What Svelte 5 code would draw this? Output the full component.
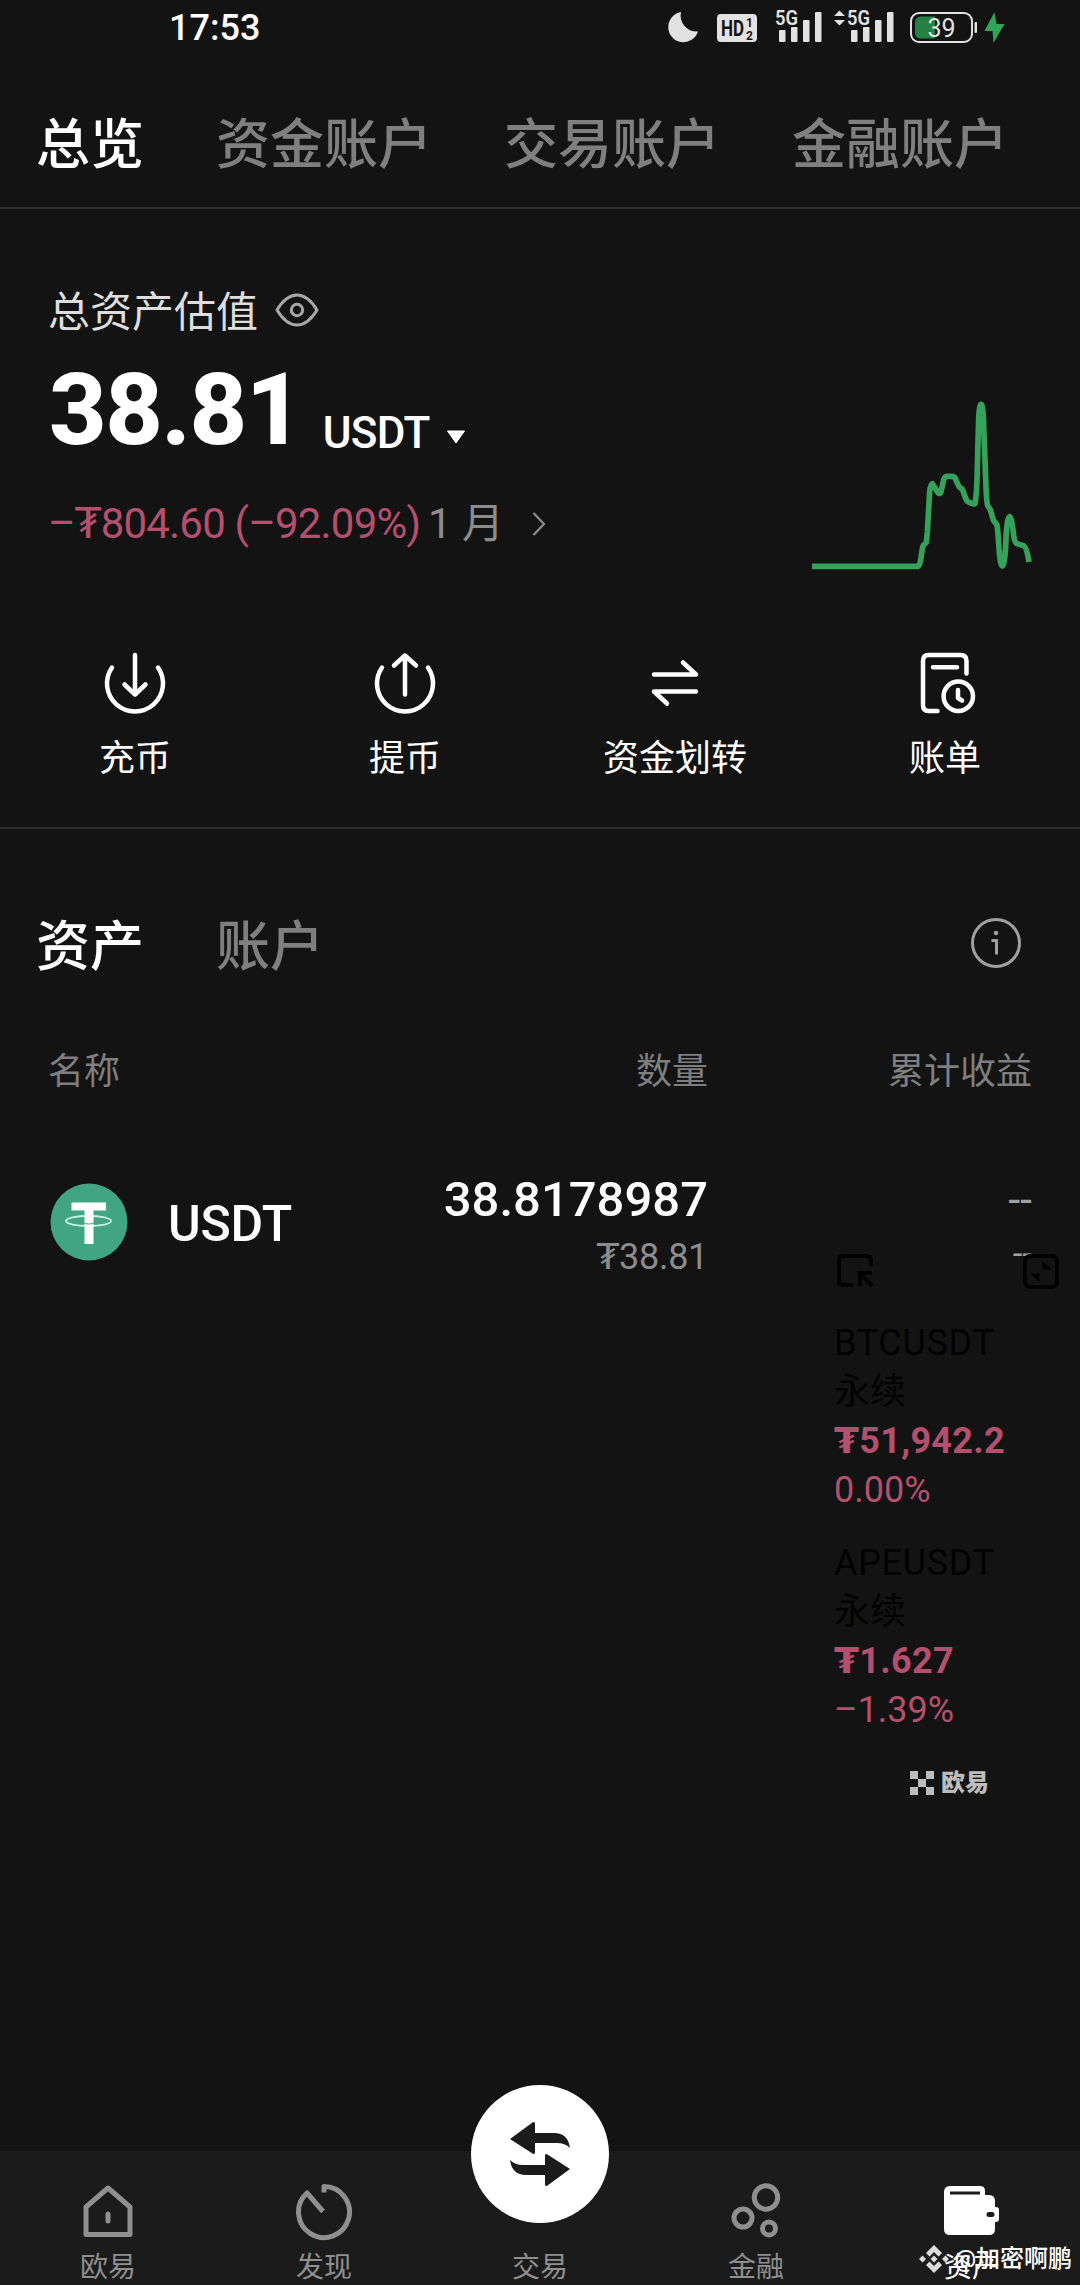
<script lang="ts">
	type Ticker = { pair: string; price: string; change: string };

	const accounts = ['总览', '资金账户', '交易账户', '金融账户'];
	const lists = ['资产', '账户'];
	const tickers: Ticker[] = [
		{ pair: 'BTCUSDT', price: '51,942.2', change: '0.00%' },
		{ pair: 'APEUSDT', price: '1.627', change: '–1.39%' }
	];

	let account = $state('总览');
	let list = $state('资产');
</script>

<div class="app">
	<div class="status">
		<span class="time">17:53</span>
		<svg class="indicators" width="340" height="44" viewBox="665 5 340 44" fill="#e2e2e2">
			<path d="M681 12a15.2 15.2 0 1 0 17 19.500a16 16 0 0 1-17-19.500z" />
			<rect x="717" y="14" width="40" height="28" rx="4" />
			<g fill="#131313" font-weight="700">
				<text x="721" y="36" font-size="22" textLength="23" lengthAdjust="spacingAndGlyphs">HD</text>
				<text x="746" y="27" font-size="12">1</text>
				<text x="746" y="40" font-size="12">2</text>
			</g>
			{#each [0, 72] as dx}
				<g transform="translate({dx} 0)">
					<text x="775" y="25" font-size="21" font-weight="600" textLength="23" lengthAdjust="spacingAndGlyphs">5G</text>
					<rect x="779" y="30" width="6.500" height="12" rx="1" />
					<rect x="791" y="27" width="6.500" height="15" rx="1" />
					<rect x="803" y="20" width="6.500" height="22" rx="1" />
					<rect x="815" y="12" width="6.500" height="30" rx="1" />
				</g>
			{/each}
			<path d="M839.500 10.500l5.500 5.500h-11zM839.500 25.500l5.500-5.500h-11z" />
			<rect x="911" y="13" width="61" height="29" rx="8" fill="none" stroke="#e2e2e2" stroke-width="2" />
			<path d="M921 16.500h14v22h-14q-6 0-6-6v-10q0-6 6-6z" fill="#248043" />
			<rect x="974.500" y="22" width="2.500" height="11" rx="1" />
			<text x="941.500" y="36.500" font-size="25" text-anchor="middle">39</text>
			<path d="M994.500 12l-10 19h8l1 12 11-19h-8z" fill="#32a458" />
		</svg>
	</div>

	<nav class="tabs top">
		{#each accounts as name}
			<button class:active={account === name} onclick={() => (account = name)}>{name}</button>
		{/each}
	</nav>

	<section class="summary">
		<div class="worth">
			<div class="label">
				<span>总资产估值</span>
				<svg width="44" height="34" viewBox="0 0 44 34" fill="none" stroke="#a8a8a8" stroke-width="3">
					<path d="M2 17C8 7 14 2 22 2s14 5 20 15c-6 10-12 15-20 15S8 27 2 17z" stroke-linejoin="round" />
					<circle cx="22" cy="17" r="5.700" />
				</svg>
			</div>
			<div class="total">
				<strong>38.81</strong>
				<span>USDT</span>
				<svg width="20" height="14" viewBox="0 0 20 14"><path d="M1.500 1h17L10 13z" fill="#fff" stroke="#fff" stroke-linejoin="round" /></svg>
			</div>
			<div class="pnl">
				<span class="down">–₮804.60 (–92.09%)</span>
				<span class="period"><span class="num">1</span> 月</span>
				<svg width="14" height="26" viewBox="0 0 14 26" fill="none" stroke="#8c8c8c" stroke-width="2.200"><path d="M1.500 2l10.500 11-10.500 11" /></svg>
			</div>
		</div>
		<svg class="chart" width="224" height="174" viewBox="0 0 672 522" fill="none" stroke="#35a15b" stroke-width="17" stroke-linejoin="round">
			<path d="M6 508H324Q329 505 332 488L338 450Q340 442 349 436L352 405L359 285Q361 262 367 260L384 287Q390 293 393 285L401 248Q404 239 411 238H426Q434 238 437 247L447 269L457 277L467 304Q470 313 480 317Q489 323 495 320Q499 300 501 250L506 60Q509 22 513 22Q518 22 520 60L528 270Q530 318 533 326L541 338L550 369L561 384Q564 405 567 455Q571 507 577 507Q583 507 587 450Q590 361 598 359Q604 358 609 398Q612 432 618 438Q623 442 641 446Q650 450 657 495" />
		</svg>
	</section>

	<section class="actions">
		<button>
			<svg width="64" height="64" viewBox="0 0 64 64">
				<path d="M9 16.500a28 28 0 1 0 46 0M32 4v39M21.500 33.500L32 43.500l10.500-10" />
			</svg>
			<span>充币</span>
		</button>
		<button>
			<svg width="64" height="64" viewBox="0 0 64 64">
				<path d="M9 16.500a28 28 0 1 0 46 0M32 43.500V4.500M21 14.500L32 4.500l11 10" />
			</svg>
			<span>提币</span>
		</button>
		<button>
			<svg width="64" height="64" viewBox="0 0 64 64">
				<path d="M11 23.500h42L40 11.500M53 40.500H11l13 12" />
			</svg>
			<span>资金划转</span>
		</button>
		<button>
			<svg width="64" height="64" viewBox="0 0 64 64">
				<path d="M53.500 22.500V10q0-6-6-6h-32q-5.500 0-5.500 6v44q0 6 5.500 6h9M20 16.300h24M45 39v8l4 2.500" />
				<circle cx="45.300" cy="45.300" r="14.700" />
			</svg>
			<span>账单</span>
		</button>
	</section>

	<nav class="tabs lists">
		{#each lists as name}
			<button class:active={list === name} onclick={() => (list = name)}>{name}</button>
		{/each}
		<svg class="info" width="52" height="52" viewBox="0 0 52 52" fill="none" stroke="#a0a0a0" stroke-width="3">
			<circle cx="26" cy="26" r="23.500" />
			<path d="M21.500 23.500h5v14" />
			<circle cx="26" cy="16" r="2.300" fill="#a0a0a0" stroke="none" />
		</svg>
	</nav>

	<div class="grid head">
		<span>名称</span>
		<span>数量</span>
		<span>累计收益</span>
	</div>

	<div class="grid row">
		<div class="coin">
			<svg width="78" height="78" viewBox="0 0 78 78">
				<circle cx="39" cy="39" r="38.500" fill="#41a583" />
				<ellipse cx="38.500" cy="38" rx="22.500" ry="5" fill="none" stroke="#c8f5e5" stroke-width="1.800" />
				<path d="M21.500 19.500H56v8H43.500V61h-9V27.500h-13z" fill="#fff" />
				<path d="M34.500 40.500q4 1 9 0" fill="none" stroke="#41a583" />
			</svg>
			<span>USDT</span>
		</div>
		<div class="amount">
			<span class="qty">38.8178987</span>
			<span class="fiat">₮38.81</span>
		</div>
		<div class="profit">
			<span>--</span>
			<span>--</span>
		</div>
	</div>

	<aside class="float">
		<div class="tools">
			<svg width="38" height="36" viewBox="0 0 38 36">
				<path d="M35 13V7q0-4-4-4H7Q3 3 3 7v21q0 4 4 4h10" />
				<path d="M24 33V20h12M25 21l11 12" />
			</svg>
			<svg width="38" height="38" viewBox="0 0 38 38">
				<rect x="3" y="3" width="32" height="31" rx="5" />
				<path d="M21 9v7h8zM9 21h8v7z" fill="#000" stroke-width="1" />
			</svg>
		</div>
		{#each tickers as t (t.pair)}
			<div class="ticker">
				<span class="pair">{t.pair}</span>
				<span class="kind">永续</span>
				<span class="price">₮{t.price}</span>
				<span class="change">{t.change}</span>
			</div>
		{/each}
		<div class="brand">
			<svg width="24" height="24" viewBox="0 0 24 24"><path d="M0 0h8v8H0zM16 0h8v8h-8zM8 8h8v8H8zM0 16h8v8H0zM16 16h8v8h-8z" fill="#bdbdbd" /></svg>
			<span>欧易</span>
		</div>
	</aside>

	<footer>
		<button>
			<svg width="60" height="60" viewBox="0 0 60 60">
				<path d="M30 6L52 25V52.500H8V25z" />
				<path d="M30 32v7" stroke-linecap="round" />
			</svg>
			<span>欧易</span>
		</button>
		<button>
			<svg width="60" height="60" viewBox="0 0 60 60">
				<path d="M30 10.500V4.500a25.500 25.500 0 1 1-17 6.500L29 29.500" />
			</svg>
			<span>发现</span>
		</button>
		<button class="trade">
			<span class="fab">
				<svg width="64" height="68" viewBox="0 0 64 68">
					<path d="M2 19L24.500 2.500Q27 1 27 4v9H46Q60 13 62 28Q57 23 49 23H27v9q0 3-2.500 1.500z" />
					<path d="M62 49L39.500 65.500Q37 67 37 64v-9H18Q4 55 2 40Q7 45 15 45H37v-9q0-3 2.500-1.500z" />
				</svg>
			</span>
			<span>交易</span>
		</button>
		<button>
			<svg width="60" height="60" viewBox="0 0 60 60">
				<circle cx="40" cy="15.500" r="11.700" />
				<circle cx="17" cy="36" r="9" />
				<circle cx="43" cy="46.500" r="6.500" />
			</svg>
			<span>金融</span>
		</button>
		<button class="current">
			<svg width="60" height="60" viewBox="0 0 60 60">
				<path d="M8 4h30q5 0 5 5v4h4q6 0 6 6v6h1q3 0 3 3v9q0 3-3 3h-1v7q0 6-6 6H8q-6 0-6-6V10q0-6 6-6z" fill="#fff" stroke="none" />
				<path d="M8 11h30" stroke="#1b1b1b" stroke-width="3" />
				<rect x="44.500" y="30" width="8" height="5" rx="2.500" fill="#1b1b1b" stroke="none" />
			</svg>
			<span>资产</span>
		</button>
	</footer>

	<div class="watermark">
		<svg width="30" height="30" viewBox="0 0 30 30" fill="#dcdcdc">
			<path d="M15 1l8 8-3.500 3.500L15 8l-4.500 4.500L7 9zM15 29l-8-8 3.500-3.500L15 22l4.500-4.500L23 21zM15 11.500l3.500 3.500-3.500 3.500-3.500-3.500zM3.500 11.500L7 15l-3.500 3.500L0 15zM26.500 11.500L30 15l-3.500 3.500L23 15z" />
		</svg>
		<span>@加密啊鹏</span>
	</div>
</div>

<style>
	:global(body) {
		background: #131313;
	}
	.app {
		position: relative;
		width: 1080px;
		height: 2285px;
		overflow: hidden;
		display: flex;
		flex-direction: column;
		background: #131313;
		color: #fff;
		font-family: Roboto, 'Noto Sans CJK SC', 'DejaVu Sans', sans-serif;
	}
	svg {
		display: block;
		flex: none;
	}
	button {
		background: none;
		border: 0;
		padding: 0;
		color: inherit;
		font: inherit;
	}
	.status {
		height: 56px;
		display: flex;
		justify-content: space-between;
		align-items: center;
		padding: 0 75px 2px 169px;
		box-sizing: border-box;
	}
	.time {
		font-size: 36px;
		font-weight: 500;
		padding-top: 2px;
	}
	.tabs {
		display: flex;
		align-items: center;
		gap: 72px;
		padding: 0 36px;
		box-sizing: border-box;
		font-size: 54px;
		line-height: 80px;
		font-weight: 500;
		color: #7f7f7f;
	}
	.tabs .active {
		color: #fff;
	}
	.top {
		height: 153px;
		padding-top: 29px;
		border-bottom: 2px solid #2b2b2b;
	}
	.summary {
		height: 400px;
		padding: 78px 48px 0;
		box-sizing: border-box;
		display: flex;
		justify-content: space-between;
	}
	.label {
		display: flex;
		align-items: center;
		gap: 17px;
		height: 46px;
		font-size: 42px;
		line-height: 46px;
		color: #dedede;
	}
	.label span {
		padding-top: 5px;
	}
	.total {
		display: flex;
		align-items: baseline;
		margin-top: 27px;
		height: 100px;
		line-height: 100px;
	}
	.total strong {
		font-size: 100px;
		font-weight: 800;
		letter-spacing: -1.5px;
		margin-left: 1px;
	}
	.total span {
		position: relative;
		top: 4px;
		font-size: 44px;
		font-weight: 500;
		letter-spacing: -0.8px;
		margin-left: 21px;
	}
	.total svg {
		margin: 0 0 8px 16px;
	}
	.pnl {
		display: flex;
		align-items: center;
		margin-top: 36px;
		height: 56px;
		font-size: 42px;
		line-height: 56px;
	}
	.down {
		color: #b4506d;
		width: 380px;
		white-space: nowrap;
		letter-spacing: -0.8px;
	}
	.period {
		color: #8c8c8c;
		width: 104px;
		white-space: nowrap;
	}
	.chart {
		margin: 110px -2px 0 0;
	}
	.actions {
		height: 220px;
		padding-top: 42px;
		box-sizing: border-box;
		display: grid;
		grid-template-columns: repeat(4, 270px);
		border-bottom: 2px solid #2b2b2b;
	}
	.actions button {
		display: flex;
		flex-direction: column;
		align-items: center;
		font-size: 36px;
		line-height: 50px;
		gap: 19px;
	}
	.actions svg {
		fill: none;
		stroke: #fff;
		stroke-width: 4.5;
		stroke-linecap: round;
		stroke-linejoin: round;
	}
	.lists {
		height: 171px;
		padding-top: 66px;
	}
	.info {
		margin: -9px 22px 0 auto;
	}
	.grid {
		display: grid;
		grid-template-columns: 360px 300px 324px;
		padding: 0 48px;
	}
	.grid > :nth-child(n + 2) {
		text-align: right;
	}
	.head {
		margin-top: 47px;
		font-size: 36px;
		line-height: 50px;
		color: #7f7f7f;
	}
	.row {
		margin-top: 69px;
	}
	.coin {
		display: flex;
		align-items: center;
		height: 112px;
		gap: 40px;
		padding-left: 2px;
		font-size: 50px;
		font-weight: 500;
	}
	.coin span {
		padding-top: 3px;
		letter-spacing: -0.2px;
	}
	.amount,
	.profit {
		display: flex;
		flex-direction: column;
		align-items: flex-end;
	}
	.qty {
		font-size: 49px;
		line-height: 67px;
		font-weight: 500;
	}
	.fiat {
		font-size: 36px;
		line-height: 48px;
		color: #8c8c8c;
		letter-spacing: -0.3px;
	}
	.profit {
		color: #a0a0a0;
		font-size: 43px;
		line-height: 67px;
	}
	.profit span + span {
		font-size: 35px;
		line-height: 42px;
	}
	.float {
		position: absolute;
		left: 834px;
		top: 1253px;
		width: 226px;
		display: flex;
		flex-direction: column;
		color: #020202;
	}
	.tools {
		display: flex;
		justify-content: space-between;
		height: 66px;
		margin-left: 2px;
	}
	.tools svg {
		fill: none;
		stroke: #020202;
		stroke-width: 4;
	}
	.ticker {
		display: flex;
		flex-direction: column;
		font-size: 36px;
		line-height: 49px;
		margin-bottom: 24px;
		white-space: nowrap;
	}
	.ticker span {
		height: 49px;
	}
	.pair {
		letter-spacing: 0.7px;
	}
	.price {
		color: #b4506d;
		font-weight: 700;
		letter-spacing: 0.3px;
	}
	.change {
		color: #b4506d;
	}
	.brand {
		display: flex;
		align-items: center;
		gap: 7px;
		height: 30px;
		margin: 9px 0 0 76px;
		color: #bdbdbd;
		font-size: 24px;
		line-height: 30px;
		font-weight: 900;
	}
	footer {
		margin-top: auto;
		height: 134px;
		flex: none;
		background: #1b1b1b;
		display: grid;
		grid-template-columns: repeat(5, 216px);
		color: #8f8f8f;
		font-size: 28px;
		line-height: 40px;
	}
	footer button {
		display: flex;
		flex-direction: column;
		align-items: center;
		padding-top: 31px;
		gap: 6px;
	}
	footer button > svg {
		fill: none;
		stroke: #8f8f8f;
		stroke-width: 5;
		stroke-linejoin: round;
	}
	footer .trade {
		padding-top: 0;
		margin-top: -66px;
		gap: 25px;
	}
	.fab {
		display: flex;
		align-items: center;
		justify-content: center;
		width: 138px;
		height: 138px;
		border-radius: 50%;
		background: #fff;
	}
	.fab svg {
		fill: #1b1b1b;
	}
	footer .current {
		color: #fff;
	}
	.watermark {
		position: absolute;
		right: 8px;
		bottom: 10px;
		display: flex;
		align-items: center;
		gap: 2px;
		font-size: 24px;
		line-height: 32px;
		font-weight: 500;
		color: #fff;
	}
	.watermark svg {
		margin-right: 3px;
	}
</style>
